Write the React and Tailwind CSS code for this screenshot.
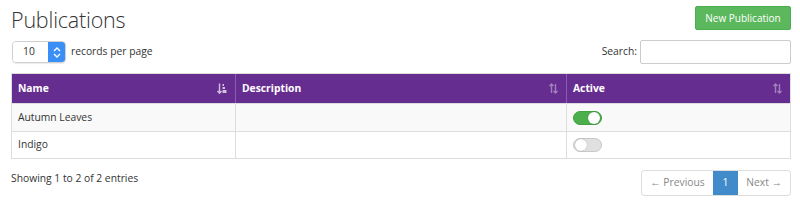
import React from "react";

function SortBoth() {
  return (
    <svg width="9" height="11" viewBox="0 0 9 11" className="opacity-40">
      <path d="M2.5 1 L2.5 10 M0.5 3 L2.5 1 L4.5 3" stroke="#fff" strokeWidth="1.4" fill="none" />
      <path d="M6.5 10 L6.5 1 M4.5 8 L6.5 10 L8.5 8" stroke="#fff" strokeWidth="1.4" fill="none" />
    </svg>
  );
}

function SortAsc() {
  return (
    <svg width="10" height="11" viewBox="0 0 10 11" className="opacity-70">
      <path d="M2.5 0.5 L2.5 10 M0.5 8 L2.5 10.2 L4.5 8" stroke="#fff" strokeWidth="1.4" fill="none" />
      <rect x="5.5" y="1" width="1.5" height="2" fill="#fff" />
      <rect x="5.5" y="4" width="2.5" height="2" fill="#fff" />
      <rect x="5.5" y="7" width="4" height="3" fill="#fff" />
    </svg>
  );
}

function Toggle({ on }) {
  return (
    <div
      className={
        "w-[29px] h-[14px] rounded-full flex items-center px-[1px] border " +
        (on
          ? "bg-[#4bb04b] border-[#43a043] justify-end"
          : "bg-[#e0e0e0] border-[#c8c8c8] justify-start")
      }
    >
      <div className="w-[12px] h-[12px] rounded-full bg-white shadow-[0_0_1px_rgba(0,0,0,0.4)]" />
    </div>
  );
}

export default function App() {
  return (
    <div
      className="w-[800px] h-[207px] bg-white text-[#333] pl-[11px] pr-[9px] pt-[6px]"
      style={{ fontFamily: '"Open Sans", "Liberation Sans", sans-serif' }}
    >
      <div className="flex justify-between items-start h-[34px]">
        <h1 className="text-[21.5px] font-light leading-[26px] mt-[1px] tracking-[-0.2px]">Publications</h1>
        <button className="h-[24px] w-[96px] bg-[#5cb85c] border border-[#4cae4c] text-white text-[10px] rounded-[2px] leading-none">
          New Publication
        </button>
      </div>
      <div className="flex justify-between items-center h-[24px]">
        <div className="flex items-center gap-[5px] text-[10.3px]">
          <div className="flex w-[54px] h-[22px] rounded-[4px] border border-[#cfcfcf] overflow-hidden shadow-[0_1px_1px_rgba(0,0,0,0.08)] ml-[1px]">
            <div className="flex-1 flex items-center pl-[10px] text-[10.3px] bg-white">10</div>
            <div className="w-[17px] bg-[#3a8ff7] flex items-center justify-center">
              <svg width="8" height="13" viewBox="0 0 8 13">
                <path d="M1 5 L4 2 L7 5 M1 8 L4 11 L7 8" stroke="#fff" strokeWidth="1.4" fill="none" />
              </svg>
            </div>
          </div>
          <span>records per page</span>
        </div>
        <div className="flex items-center gap-[3px] text-[10.3px]">
          <span>Search:</span>
          <div className="w-[151px] h-[24px] border border-[#ccc] rounded-[2px] bg-white" />
        </div>
      </div>
      <div className="mt-[9px] border border-[#ddd]">
        <div className="grid grid-cols-[224px_331px_1fr] bg-[#662d91] text-white text-[10.3px] font-bold h-[29px]">
          <div className="flex items-center justify-between pl-[6px] pr-[8px] border-r border-[#8a5cb0]">
            <span>Name</span>
            <SortAsc />
          </div>
          <div className="flex items-center justify-between pl-[6px] pr-[8px] border-r border-[#8a5cb0]">
            <span>Description</span>
            <SortBoth />
          </div>
          <div className="flex items-center justify-between pl-[6px] pr-[8px]">
            <span>Active</span>
            <SortBoth />
          </div>
        </div>
        <div className="grid grid-cols-[224px_331px_1fr] bg-[#f9f9f9] text-[10.3px] h-[28px] border-t border-[#ddd]">
          <div className="flex items-center pl-[6px] border-r border-[#ddd]">Autumn Leaves</div>
          <div className="border-r border-[#ddd]" />
          <div className="flex items-center pl-[6px]"><Toggle on /></div>
        </div>
        <div className="grid grid-cols-[224px_331px_1fr] bg-white text-[10.3px] h-[27px] border-t border-[#ddd]">
          <div className="flex items-center pl-[6px] border-r border-[#ddd]">Indigo</div>
          <div className="border-r border-[#ddd]" />
          <div className="flex items-center pl-[6px]"><Toggle on={false} /></div>
        </div>
      </div>
      <div className="flex justify-between items-start mt-[11px]">
        <span className="text-[10.3px] mt-[1px]">Showing 1 to 2 of 2 entries</span>
        <div className="flex h-[26px] border border-[#ddd] rounded-[3px] text-[10.3px] overflow-hidden">
          <div className="w-[71px] flex items-center justify-center text-[#888]">← Previous</div>
          <div className="w-[25px] flex items-center justify-center bg-[#428bca] text-white">1</div>
          <div className="w-[52px] flex items-center justify-center text-[#888]">Next →</div>
        </div>
      </div>
    </div>
  );
}
